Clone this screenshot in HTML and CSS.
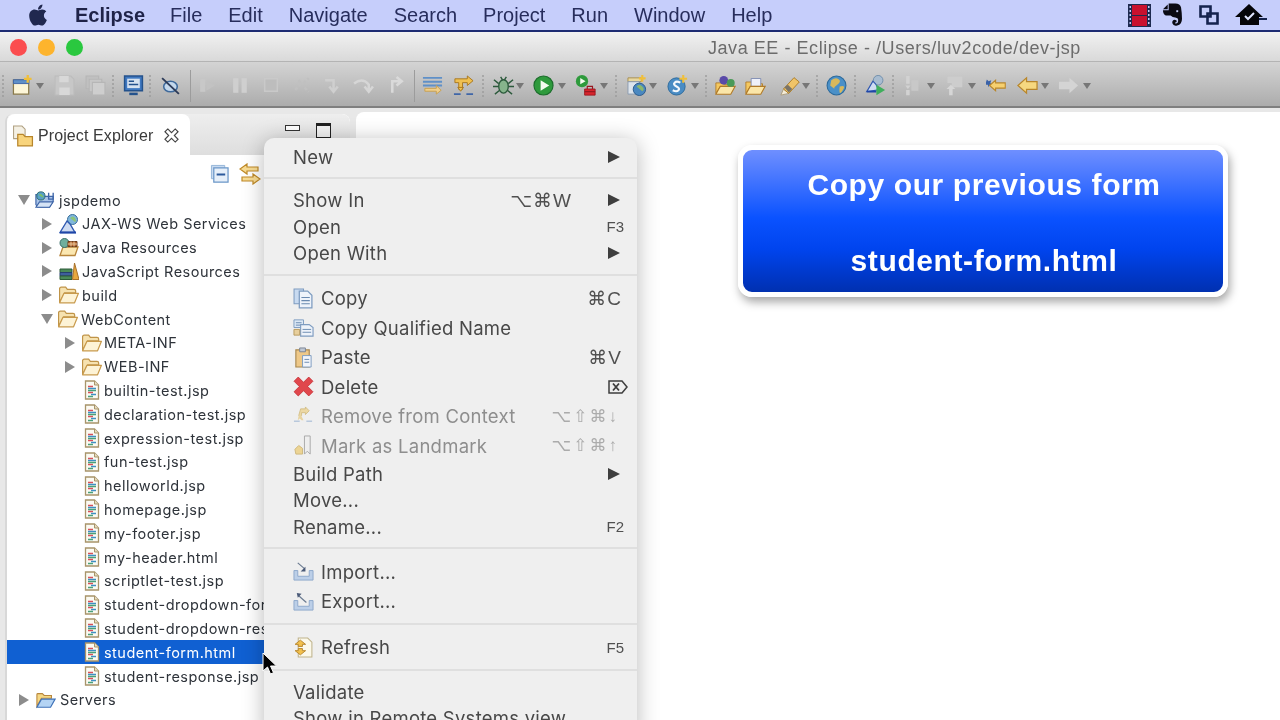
FILE: index.html
```html
<!DOCTYPE html>
<html lang="en">
<head>
    <meta charset="UTF-8">
    <title>Java EE - Eclipse</title>
    <link rel="stylesheet" href="styles.css">
</head>
<body>
<svg class="defs" width="0" height="0">
    <symbol id="i-folder" viewBox="1 2.500 18 16"><path d="M1.500 17V5q0-1.500 1.500-1.500h4l1.500 2h6q1.500 0 1.500 1.500v1.500H6L1.500 17z" fill="#f6e2b0" stroke="#c09448" stroke-width="1.100"/><path d="M1.500 17.500 5.500 9h13l-3.500 8.500z" fill="#fdf3d6" stroke="#c89a4c" stroke-width="1.100" stroke-linejoin="round"/></symbol>
    <symbol id="i-file" viewBox="0 0 20 20"><path d="M3.500 1h9l4 4v14h-13z" fill="#fbfaf2" stroke="#a8946a" stroke-width="1.300"/><path d="M12.500 1v4h4" fill="#e6dcc0" stroke="#a8946a"/><path d="M6 6.500h5M6 12.500h5" stroke="#d8505a" stroke-width="1.300"/><path d="M6 8.500h8M9 14.500h5" stroke="#3f8fc4" stroke-width="1.300"/><path d="M6 10.500h8M6 16.500h5" stroke="#4aa07a" stroke-width="1.300"/></symbol>
    <symbol id="i-project" viewBox="0 0 22 20"><path d="M1 15V4h7l2 2h10v5l-4 7H3z" fill="#a9c3e8" stroke="#3f66a8" stroke-width="1.300"/><path d="M1 18l4-6h15l-4 6z" fill="#d5e3f5" stroke="#3f66a8" stroke-width="1.300"/><circle cx="6.500" cy="5.500" r="4.500" fill="#58a0c8" stroke="#2c6a6a"/><path d="M4 4.500q2-2 4 0t1 3" fill="#7cc068"/><path d="M15 2v7h5V2" fill="none" stroke="#3f66a8" stroke-width="1.500"/></symbol>
    <symbol id="i-ws" viewBox="0 0 20 20"><circle cx="13.500" cy="5.500" r="5" fill="#7fb6dc" stroke="#3a6f9a"/><path d="M11 4q3-3 5 0t0 4" fill="#8cc47a"/><path d="M1 18.500 8 7l3 3 5 8.500z" fill="#cfdcf2" stroke="#2f58b0" stroke-width="1.400"/><path d="M1 18.500h16" stroke="#1f46a8" stroke-width="2"/></symbol>
    <symbol id="i-javares" viewBox="0 0 20 20"><path d="M1 17.500 4 9h15l-3 8.500z" fill="#fbe7b0" stroke="#b8863c" stroke-width="1.300"/><circle cx="5.500" cy="5" r="4.500" fill="#6fae9c" stroke="#39706a"/><path d="M9 3.500h9v5H9z" fill="#b4652e" stroke="#6f3d1a"/><path d="M12 3.500v5M15 3.500v5M9 6h9" stroke="#e8c89c"/></symbol>
    <symbol id="i-jsres" viewBox="0 0 20 20"><path d="M1 8h12v3.500H1z" fill="#4a8a58" stroke="#2c5a38"/><path d="M1 11.500h12V15H1z" fill="#3e5f9c" stroke="#26406e"/><path d="M1 15h12v3.500H1z" fill="#4a8a58" stroke="#2c5a38"/><path d="M13.500 18.500 15.500 2 20 18.500z" fill="#e8a840" stroke="#a8702a"/></symbol>
    <symbol id="i-servers" viewBox="0 0 22 20"><path d="M1 17V4q0-1 1-1h5l2 2h8v3H6L1 17z" fill="#f6d884" stroke="#b8863c" stroke-width="1.200"/><path d="M1 18l5-9h15l-5 9z" fill="#b4d4f4" stroke="#3f72b8" stroke-width="1.300"/></symbol>
    <symbol id="i-collapse" viewBox="0 0 20 20"><path d="M1.500 1.500h14v14h-14z" fill="#c8daf0" stroke="#94b4d8"/><path d="M4 4h15v15H4z" fill="#e6eff9" stroke="#6a96c8" stroke-width="1.300"/><path d="M7 11h9" stroke="#2c5a9c" stroke-width="2"/></symbol>
    <symbol id="i-link" viewBox="0 0 22 22"><path d="M8 1 1 6l7 5V8h11V4H8z" fill="#f8dc94" stroke="#c08a28" stroke-width="1.200"/><path d="M14 11l7 5-7 5v-3H3v-4h11z" fill="#f8dc94" stroke="#c08a28" stroke-width="1.200"/></symbol>
    <symbol id="i-new" viewBox="0 0 22 22"><path d="M1.500 5h16v15h-16z" fill="#fdf6d8" stroke="#8a7a4a" stroke-width="1.300"/><path d="M1.500 5h16v4h-16z" fill="#5f90c8" stroke="#3f66a8"/><path d="M16.500 0v8M12.500 4h8" stroke="#f0bf3a" stroke-width="2.400"/></symbol>
    <symbol id="i-save" viewBox="0 0 20 20"><path d="M1 1h15l3 3v15H1z" fill="#c7c7c7" stroke="#bcbcbc"/><path d="M5 1h9v6H5zM5 12h10v7H5z" fill="#d8d8d8"/></symbol>
    <symbol id="i-saveall" viewBox="0 0 20 20"><path d="M1 1h12v12H1z" fill="#c0c0c0" stroke="#b6b6b6"/><path d="M4 4h12v12H4z" fill="#c7c7c7" stroke="#b6b6b6"/><path d="M7 7h12v12H7z" fill="#cecece" stroke="#b6b6b6"/></symbol>
    <symbol id="i-monitor" viewBox="0 0 20 20"><path d="M1.500 1h17v14h-17z" fill="#3f78c0" stroke="#24528c" stroke-width="1.400"/><path d="M4 3.500h12v9H4z" fill="#d6e2f0"/><path d="M5.500 6h5M5.500 9h9" stroke="#24528c" stroke-width="1.300"/><path d="M6 18h8" stroke="#24528c" stroke-width="2.400"/></symbol>
    <symbol id="i-eyeoff" viewBox="0 0 20 20"><ellipse cx="10" cy="11" rx="6.500" ry="5" fill="#c4d8ec" stroke="#3f6a9c" stroke-width="1.500"/><path d="M2 3l16 15" stroke="#2c3a58" stroke-width="1.800"/></symbol>
    <symbol id="i-dis-step" viewBox="0 0 20 20"><path d="M2 4h5v12H2z" fill="#c8c8c8"/><path d="M8 5l8 5-8 5z" fill="#c2c2c2"/></symbol>
    <symbol id="i-dis-pause" viewBox="0 0 20 20"><path d="M3 3h5v14H3zM11 3h5v14h-5z" fill="#cfcfcf"/></symbol>
    <symbol id="i-dis-stop" viewBox="0 0 20 20"><path d="M3.500 3.500h12v12h-12z" fill="#bdbdbd" stroke="#c9c9c9" stroke-width="1.400"/></symbol>
    <symbol id="i-dis-net" viewBox="0 0 20 20"><path d="M3 14l5-5M11 8l5-5M6 5l3 3M12 12l4 4" stroke="#c0c0c0" stroke-width="2.500" stroke-dasharray="3 2"/></symbol>
    <symbol id="i-dis-into" viewBox="0 0 20 20"><path d="M3 5h8v9M7 11l4 5 4-5" fill="none" stroke="#cfcfcf" stroke-width="2.400"/></symbol>
    <symbol id="i-dis-over" viewBox="0 0 20 20"><path d="M1 8q8-6 14 1v6M11 11l4 5 4-5" fill="none" stroke="#d6d6d6" stroke-width="2.400"/></symbol>
    <symbol id="i-dis-ret" viewBox="0 0 20 20"><path d="M6 17V6h8M10 2l5 4-5 4" fill="none" stroke="#dadada" stroke-width="2.400"/></symbol>
    <symbol id="i-lines" viewBox="0 0 22 22"><path d="M1 3h20M1 7h20M1 11h20" stroke="#5f90c8" stroke-width="2"/><path d="M5 15h12v-3l5 5-5 4v-3H5z" fill="#f0cf8c" stroke="#c8a050" transform="translate(-2 -1)"/></symbol>
    <symbol id="i-stepdrop" viewBox="0 0 22 22"><path d="M2 4h13V1l6 5-6 5V8h-5v7H6V8H2z" fill="#f0c050" stroke="#a87820"/><path d="M1 20h7M14 20h7" stroke="#3f66a8" stroke-width="2"/><path d="M5 13l3 4 3-4z" fill="#f0c050" stroke="#a87820"/></symbol>
    <symbol id="i-bug" viewBox="0 0 22 22"><ellipse cx="11" cy="12" rx="5" ry="7" fill="#86b48c" stroke="#2c5a3c" stroke-width="1.400"/><path d="M1 5l5 4M21 5l-5 4M0 12h6M22 12h-6M2 20l5-4M20 20l-5-4M8 2l2 3M14 2l-2 3" stroke="#2c5a3c" stroke-width="1.500"/></symbol>
    <symbol id="i-run" viewBox="0 0 22 22"><circle cx="11" cy="11" r="10" fill="#2e9a3c" stroke="#1c6e2c" stroke-width="1.200"/><path d="M8 5.500l9 5.500-9 5.500z" fill="#f4fbef"/></symbol>
    <symbol id="i-runext" viewBox="0 0 24 24"><circle cx="8" cy="7" r="7" fill="#2e9a3c"/><path d="M6 3.500l6 3.500-6 3.500z" fill="#f4fbef"/><path d="M11 16h12v7H11z" fill="#d8242c" stroke="#981820"/><path d="M14 16v-3h6v3M11 19h12" fill="none" stroke="#981820" stroke-width="1.300"/></symbol>
    <symbol id="i-newserver" viewBox="0 0 22 22"><path d="M1 3h14v4H1z" fill="#e8d8a0" stroke="#a89050"/><path d="M1 7h12v13H1z" fill="#dde4ec" stroke="#8a9ab0"/><circle cx="13" cy="15" r="6.500" fill="#4a88c0" stroke="#2c5a8c"/><path d="M10 12q3-3 6 0t0 5" fill="#8cb86c"/><path d="M16 0v7M12.500 3.500h7" stroke="#f0bf3a" stroke-width="2.200"/></symbol>
    <symbol id="i-s" viewBox="0 0 22 22"><circle cx="10" cy="12" r="9" fill="#4a8cc4" stroke="#2c6a9c"/><path d="M14 8q-4-2-6 0t2 4 2 4-6 0" fill="none" stroke="#f4f8fc" stroke-width="2.200"/><path d="M17 0v8M13 4h8" stroke="#f0bf3a" stroke-width="2.200"/></symbol>
    <symbol id="i-openproj" viewBox="0 0 24 24"><path d="M1 21V9h8l2 2h9v2H6L1 21z" fill="#f4c860" stroke="#b07a28"/><path d="M1 22l5-9h17l-5 9z" fill="#fbe6a8" stroke="#b07a28" stroke-width="1.200"/><circle cx="10" cy="6" r="5" fill="#5a4aa8"/><circle cx="18" cy="9" r="4.500" fill="#4a9a58"/></symbol>
    <symbol id="i-opentype" viewBox="0 0 24 24"><path d="M1 21V8h7l2 2h10v3H6L1 21z" fill="#f4c860" stroke="#b07a28"/><path d="M7 4h11v9H7z" fill="#eef0f8" stroke="#7a88b0"/><path d="M1 22l5-9h17l-5 9z" fill="#fbe6a8" stroke="#b07a28" stroke-width="1.200"/></symbol>
    <symbol id="i-pencil" viewBox="0 0 24 24"><path d="M1 23l3-7 6 5z" fill="#f4ecd8" stroke="#a89878"/><path d="M4 16 16 3l6 5-12 13z" fill="#f0c468" stroke="#a87820"/><path d="M5 14l5 6 4-4-5-5z" fill="#7a7468"/></symbol>
    <symbol id="i-globe" viewBox="0 0 20 20"><circle cx="10" cy="10" r="9" fill="#4a90c8" stroke="#2c6a9c"/><path d="M5 5q4-3 7-1t-1 5-3 4-4-3zM13 11q3-1 4 0t-2 5-2-5z" fill="#d8b85c"/></symbol>
    <symbol id="i-wsrun" viewBox="0 0 22 24"><circle cx="14" cy="6" r="5.500" fill="#a8bcd0" stroke="#6a8aa8"/><path d="M1 19 8 7l3 3 4 7z" fill="#cfdcf2" stroke="#2f58b0" stroke-width="1.300"/><path d="M1 19h11" stroke="#1f46a8" stroke-width="2"/><path d="M12 11l10 6-10 6z" fill="#3fae5c"/></symbol>
    <symbol id="i-dis-a" viewBox="0 0 20 24"><path d="M5 1h4v9H5zM4 12l3 4 3-4zM5 17h4v6H5z" fill="#d2d2d2"/><path d="M11 6h8v12h-8z" fill="#c8c8c8"/></symbol>
    <symbol id="i-dis-b" viewBox="0 0 20 24"><path d="M3 2h17v12H8v-5H3z" fill="#cdcdcd"/><path d="M7 11l5 5H9v7H5v-7H2z" fill="#d6d6d6"/></symbol>
    <symbol id="i-lastedit" viewBox="0 0 24 20"><path d="M1 3l2 2 3-1-1 3 2 2-3 0-1 3-1-3-3 0z" fill="#3a62a8"/><path d="M4 10l7-6v3h11v6H11v3z" fill="#f6d070" stroke="#b8862c" stroke-width="1.200"/></symbol>
    <symbol id="i-back" viewBox="0 0 22 18"><path d="M1 9l9-8v4h11v8H10v4z" fill="#f6d880" stroke="#b8862c" stroke-width="1.300"/></symbol>
    <symbol id="i-fwd" viewBox="0 0 22 18"><path d="M21 9l-9-8v4H1v8h11v4z" fill="#d4d4d4"/></symbol>
    <symbol id="m-copy" viewBox="0 0 20 20"><path d="M1 1h9v14H1z" fill="#c8daf0" stroke="#7e9cc0"/><path d="M6 3h8l4 4v12H6z" fill="#eef3fa" stroke="#7e9cc0" stroke-width="1.200"/><path d="M8 9h8M8 12h8M8 15h8" stroke="#6a8ab0"/></symbol>
    <symbol id="m-cqn" viewBox="0 0 22 20"><path d="M1 2h10v8H1z" fill="#dce8f5" stroke="#7e9cc0"/><path d="M3 5h6M3 7.500h6" stroke="#6a8ab0"/><path d="M8 7h9l4 3v9H8z" fill="#eef3fa" stroke="#7e9cc0" stroke-width="1.200"/><path d="M10 12h9M10 15h9" stroke="#6a8ab0"/><path d="M1 12h6v6H1z" fill="#e8cf9c" stroke="#b89a60"/></symbol>
    <symbol id="m-paste" viewBox="0 0 20 22"><path d="M2 3h14v18H2z" fill="#eec888" stroke="#a88850" stroke-width="1.200"/><path d="M6 1h6v4H6z" fill="#c0c8d4" stroke="#7a8494"/><path d="M9 9h9v12H9z" fill="#f2f5fa" stroke="#7e9cc0"/><path d="M11 13h5M11 16h5" stroke="#6a8ab0"/></symbol>
    <symbol id="m-delete" viewBox="0 0 20 20"><path d="M5 1l5 5 5-5 4 4-5 5 5 5-4 4-5-5-5 5-4-4 5-5-5-5z" fill="#e0474c" stroke="#c83238" stroke-width=".8"/></symbol>
    <symbol id="m-remove" viewBox="0 0 22 20"><path d="M8 2l5 0 0-2 4 4-4 4v-2H9v3H6z" fill="#ecd8a4" stroke="#cfb87c" stroke-width=".8"/><path d="M8 8l3 6h-2l-2-2-2 2 1-5z" fill="#e8d4a0"/><path d="M1 15h6M14 15h6" stroke="#b8c8dc" stroke-width="1.500"/></symbol>
    <symbol id="m-mark" viewBox="0 0 20 22"><path d="M11 1h6v19l-3-3-3 3z" fill="#eeeeee" stroke="#a8a8a8"/><path d="M1 15l4-4 4 3v6H2z" fill="#ecd494" stroke="#cfb87c"/></symbol>
    <symbol id="m-import" viewBox="0 0 22 20"><path d="M1 9v10h20V9h-4v6H5V9z" fill="#bccfe8" stroke="#8ea8cc"/><path d="M5 1l7 6" stroke="#6a7a90" stroke-width="1.200"/><path d="M13 5l0 5-5 0z" fill="#4a5a78"/></symbol>
    <symbol id="m-export" viewBox="0 0 22 20"><path d="M1 9v10h20V9h-4v6H5V9z" fill="#bccfe8" stroke="#8ea8cc"/><path d="M6 4l8 7" stroke="#6a7a90" stroke-width="1.200"/><path d="M4 1l5 1-4 4z" fill="#4a5a78"/></symbol>
    <symbol id="m-refresh" viewBox="0 0 20 20"><path d="M5 1h9l4 4v14H5z" fill="#fbf8ea" stroke="#c0b48c"/><path d="M2 7l5-4 5 4H9v2H5V7zM12 13l-5 4-5-4h3v-2h4v2z" fill="#f2c04c" stroke="#b8862c" stroke-width=".9"/></symbol>
</svg>

<div class="menubar">
    <svg class="apple" viewBox="0 0 384 512"><path d="M318.700 268.700c-.2-36.700 16.400-64.400 50-84.800-18.800-26.900-47.200-41.700-84.700-44.600-35.500-2.800-74.300 20.700-88.500 20.700-15 0-49.400-19.700-76.400-19.700C63.300 141.200 4 184.800 4 273.500q0 39.300 14.400 81.200c12.800 36.700 59 126.700 107.200 125.200 25.200-.6 43-17.900 75.800-17.900 31.800 0 48.300 17.900 76.400 17.900 48.600-.7 90.400-82.500 102.600-119.300-65.200-30.700-61.700-90-61.700-91.900zm-56.600-164.200c27.300-32.400 24.800-61.900 24-72.500-24.100 1.400-52 16.400-67.900 34.900-17.500 19.800-27.800 44.300-25.600 71.900 26.100 2 49.900-11.400 69.500-34.300z"/></svg>
    <b>Eclipse</b>
    <span>File</span>
    <span>Edit</span>
    <span>Navigate</span>
    <span>Search</span>
    <span>Project</span>
    <span>Run</span>
    <span>Window</span>
    <span>Help</span>
    <div class="status-icons">
        <svg class="st-film" viewBox="0 0 23 23"><path d="M0 0h23v23H0z" fill="#1e2a50"/><path d="M4 1h15v10H4zM4 12h15v10H4z" fill="#c8102e"/><path d="M1.500 2h1.500v2H1.500zM1.500 6h1.500v2H1.500zM1.500 10h1.500v2H1.500zM1.500 14h1.500v2H1.500zM1.500 18h1.500v2H1.500zM20 2h1.500v2H20zM20 6h1.500v2H20zM20 10h1.500v2H20zM20 14h1.500v2H20zM20 18h1.500v2H20z" fill="#c5cdf8"/></svg>
        <svg class="st-note" viewBox="0 0 21 24"><path d="M1 6 6 1v5zM7 0h7q5 0 6 4 1 6 1 12t-5 7q-4 1-5-2t2-4l2 .5q1 1 0 2-2 0-1 1.500 3 .5 3-4 0-2-3-2.500-3 0-5-2H4Q1 11 1 7h6z" fill="#0b0b14"/><path d="M15 7h2v2h-2z" fill="#c5cdf8"/></svg>
        <svg class="st-dup" viewBox="0 0 20 20"><path d="M1.500 1.500h10v10h-10zM8.500 8.500h10v10h-10z" fill="none" stroke="#15234e" stroke-width="2.600"/></svg>
        <svg class="st-home" viewBox="0 0 32 22"><path d="M14 0 0 13h5v8h19v-8h4z" fill="#050508"/><path d="M10 12l3 3 6-6" fill="none" stroke="#dfe4fc" stroke-width="2"/><path d="M24 15h8" stroke="#15234e" stroke-width="2"/></svg>
    </div>
</div>

<div class="titlebar">
    <i class="light red"></i><i class="light amber"></i><i class="light green"></i>
    <span class="title">Java EE - Eclipse - /Users/luv2code/dev-jsp</span>
</div>

<div class="toolbar">
    <i class="grip"></i>
    <svg class="tool"><use href="#i-new"/></svg><i class="drop"></i>
    <svg class="tool"><use href="#i-save"/></svg>
    <svg class="tool"><use href="#i-saveall"/></svg>
    <i class="grip"></i>
    <svg class="tool"><use href="#i-monitor"/></svg>
    <i class="grip"></i>
    <svg class="tool"><use href="#i-eyeoff"/></svg>
    <i class="vsep"></i>
    <svg class="tool"><use href="#i-dis-step"/></svg>
    <svg class="tool"><use href="#i-dis-pause"/></svg>
    <svg class="tool"><use href="#i-dis-stop"/></svg>
    <svg class="tool"><use href="#i-dis-net"/></svg>
    <svg class="tool"><use href="#i-dis-into"/></svg>
    <svg class="tool"><use href="#i-dis-over"/></svg>
    <svg class="tool"><use href="#i-dis-ret"/></svg>
    <i class="vsep"></i>
    <svg class="tool"><use href="#i-lines"/></svg>
    <svg class="tool"><use href="#i-stepdrop"/></svg>
    <i class="grip"></i>
    <svg class="tool"><use href="#i-bug"/></svg><i class="drop"></i>
    <svg class="tool"><use href="#i-run"/></svg><i class="drop"></i>
    <svg class="tool"><use href="#i-runext"/></svg><i class="drop"></i>
    <i class="grip"></i>
    <svg class="tool"><use href="#i-newserver"/></svg><i class="drop"></i>
    <svg class="tool"><use href="#i-s"/></svg><i class="drop"></i>
    <i class="grip"></i>
    <svg class="tool"><use href="#i-openproj"/></svg>
    <svg class="tool"><use href="#i-opentype"/></svg>
    <svg class="tool"><use href="#i-pencil"/></svg><i class="drop"></i>
    <i class="grip"></i>
    <svg class="tool"><use href="#i-globe"/></svg>
    <i class="grip"></i>
    <svg class="tool"><use href="#i-wsrun"/></svg>
    <i class="grip"></i>
    <svg class="tool"><use href="#i-dis-a"/></svg><i class="drop"></i>
    <svg class="tool"><use href="#i-dis-b"/></svg><i class="drop"></i>
    <svg class="tool"><use href="#i-lastedit"/></svg>
    <svg class="tool"><use href="#i-back"/></svg><i class="drop"></i>
    <svg class="tool"><use href="#i-fwd"/></svg><i class="drop"></i>
</div>

<div class="workbench">
    <div class="view">
        <div class="view-tabs">
            <div class="tab">
                <svg class="tab-icon" viewBox="1 0 20 21"><path d="M2 1h8l3 3v9H2z" fill="#f4f0e4" stroke="#b0a080"/><path d="M6 12V9h5l2 2h7v9H6z" fill="#f8d47c" stroke="#b8862c" stroke-width="1.200"/></svg>
                <span>Project Explorer</span>
                <svg class="tab-close" viewBox="0 0 16 16"><path d="M4 1l4 4 4-4 3 3-4 4 4 4-3 3-4-4-4 4-3-3 4-4-4-4z" fill="#fff" stroke="#444" stroke-width="1.200"/></svg>
            </div>
            <div class="view-btns">
                <i class="btn-min"></i>
                <i class="btn-max"></i>
            </div>
        </div>
        <div class="view-bar">
            <svg class="bar-icon collapse"><use href="#i-collapse"/></svg>
            <svg class="bar-icon"><use href="#i-link"/></svg>
        </div>
        <div class="tree">
            <div class="row l0"><i class="tw down"></i><svg class="ic"><use href="#i-project"/></svg><span>jspdemo</span></div>
            <div class="row l1"><i class="tw"></i><svg class="ic"><use href="#i-ws"/></svg><span>JAX-WS Web Services</span></div>
            <div class="row l1"><i class="tw"></i><svg class="ic"><use href="#i-javares"/></svg><span>Java Resources</span></div>
            <div class="row l1"><i class="tw"></i><svg class="ic"><use href="#i-jsres"/></svg><span>JavaScript Resources</span></div>
            <div class="row l1"><i class="tw"></i><svg class="ic"><use href="#i-folder"/></svg><span>build</span></div>
            <div class="row l1"><i class="tw down"></i><svg class="ic"><use href="#i-folder"/></svg><span>WebContent</span></div>
            <div class="row l2"><i class="tw"></i><svg class="ic"><use href="#i-folder"/></svg><span>META-INF</span></div>
            <div class="row l2"><i class="tw"></i><svg class="ic"><use href="#i-folder"/></svg><span>WEB-INF</span></div>
            <div class="row l2"><i class="tw none"></i><svg class="ic"><use href="#i-file"/></svg><span>builtin-test.jsp</span></div>
            <div class="row l2"><i class="tw none"></i><svg class="ic"><use href="#i-file"/></svg><span>declaration-test.jsp</span></div>
            <div class="row l2"><i class="tw none"></i><svg class="ic"><use href="#i-file"/></svg><span>expression-test.jsp</span></div>
            <div class="row l2"><i class="tw none"></i><svg class="ic"><use href="#i-file"/></svg><span>fun-test.jsp</span></div>
            <div class="row l2"><i class="tw none"></i><svg class="ic"><use href="#i-file"/></svg><span>helloworld.jsp</span></div>
            <div class="row l2"><i class="tw none"></i><svg class="ic"><use href="#i-file"/></svg><span>homepage.jsp</span></div>
            <div class="row l2"><i class="tw none"></i><svg class="ic"><use href="#i-file"/></svg><span>my-footer.jsp</span></div>
            <div class="row l2"><i class="tw none"></i><svg class="ic"><use href="#i-file"/></svg><span>my-header.html</span></div>
            <div class="row l2"><i class="tw none"></i><svg class="ic"><use href="#i-file"/></svg><span>scriptlet-test.jsp</span></div>
            <div class="row l2"><i class="tw none"></i><svg class="ic"><use href="#i-file"/></svg><span>student-dropdown-form.html</span></div>
            <div class="row l2"><i class="tw none"></i><svg class="ic"><use href="#i-file"/></svg><span>student-dropdown-response.jsp</span></div>
            <div class="row l2 selected"><i class="tw none"></i><svg class="ic"><use href="#i-file"/></svg><span>student-form.html</span></div>
            <div class="row l2"><i class="tw none"></i><svg class="ic"><use href="#i-file"/></svg><span>student-response.jsp</span></div>
            <div class="row l0"><i class="tw"></i><svg class="ic"><use href="#i-servers"/></svg><span>Servers</span></div>
        </div>
    </div>
    <div class="editor"></div>
</div>

<div class="menu">
    <div class="mi"><span class="label">New</span><i class="sub"></i></div>
    <div class="sep"></div>
    <div class="mi"><span class="label">Show In</span><span class="key combo">⌥⌘W</span><i class="sub"></i></div>
    <div class="mi"><span class="label">Open</span><span class="key fn">F3</span></div>
    <div class="mi"><span class="label">Open With</span><i class="sub"></i></div>
    <div class="sep"></div>
    <div class="mi has-icon"><svg class="mic"><use href="#m-copy"/></svg><span class="label">Copy</span><span class="key cmd">⌘C</span></div>
    <div class="mi has-icon"><svg class="mic"><use href="#m-cqn"/></svg><span class="label">Copy Qualified Name</span></div>
    <div class="mi has-icon"><svg class="mic"><use href="#m-paste"/></svg><span class="label">Paste</span><span class="key cmd">⌘V</span></div>
    <div class="mi has-icon"><svg class="mic"><use href="#m-delete"/></svg><span class="label">Delete</span><svg class="del" viewBox="0 0 20 14"><path d="M1 1h13l5 6-5 6H1z" fill="none" stroke="#3e3e3e" stroke-width="1.500"/><path d="M5 3.500l6 7M11 3.500l-6 7" stroke="#3e3e3e" stroke-width="1.800"/></svg></div>
    <div class="mi has-icon off"><svg class="mic"><use href="#m-remove"/></svg><span class="label">Remove from Context</span><span class="key cmd">⌥⇧⌘↓</span></div>
    <div class="mi has-icon off"><svg class="mic"><use href="#m-mark"/></svg><span class="label">Mark as Landmark</span><span class="key cmd">⌥⇧⌘↑</span></div>
    <div class="mi"><span class="label">Build Path</span><i class="sub"></i></div>
    <div class="mi"><span class="label">Move...</span></div>
    <div class="mi"><span class="label">Rename...</span><span class="key fn">F2</span></div>
    <div class="sep"></div>
    <div class="mi has-icon"><svg class="mic"><use href="#m-import"/></svg><span class="label">Import...</span></div>
    <div class="mi has-icon"><svg class="mic"><use href="#m-export"/></svg><span class="label">Export...</span></div>
    <div class="sep"></div>
    <div class="mi has-icon"><svg class="mic"><use href="#m-refresh"/></svg><span class="label">Refresh</span><span class="key fn">F5</span></div>
    <div class="sep"></div>
    <div class="mi"><span class="label">Validate</span></div>
    <div class="mi"><span class="label">Show in Remote Systems view</span></div>
</div>

<div class="callout">
    <p>Copy our previous form</p>
    <p>student-form.html</p>
</div>

<svg class="cursor" viewBox="0 0 16 24"><path d="M1 1v18l4.500-4 3 7 3-1.300-3-6.700h6z" fill="#000" stroke="#fff" stroke-width="1"/></svg>
</body>
</html>
```

FILE: styles.css
```css
* {
    box-sizing: border-box;
}
html, body {
    margin: 0;
    padding: 0;
    height: 100%;
    overflow: hidden;
    background-color: #e8e8e8;
    font-family: "Liberation Sans", Arial, sans-serif;
    color: #333;
}
body {
    display: flex;
    flex-direction: column;
    filter: blur(0.45px);
}
.defs {
    position: absolute;
}

/* mac menu bar */
.menubar {
    display: flex;
    align-items: center;
    gap: 26px;
    height: 32px;
    padding-left: 28px;
    background-color: #c6cefb;
    border-bottom: 2px solid #1d2b72;
    font-size: 20px;
    color: #272d5c;
}
.menubar b {
    color: #1f2348;
    margin-left: 1px;
    margin-right: -1px;
}
.apple {
    width: 20px;
    height: 24px;
    fill: #20284f;
}
.status-icons {
    display: flex;
    align-items: center;
    margin-left: auto;
    width: 152px;
}
.st-film { width: 23px; height: 23px; margin-right: 11px; }
.st-note { width: 20px; height: 24px; margin-right: 17px; }
.st-dup { width: 20px; height: 20px; margin-right: 16px; }
.st-home { width: 32px; height: 22px; }

/* window title */
.titlebar {
    display: flex;
    align-items: center;
    height: 30px;
    padding: 2px 0 0 10px;
    background: linear-gradient(#f1f1f1, #d9d9d9);
    border-bottom: 1px solid #b4b4b4;
}
.light {
    width: 17px;
    height: 17px;
    border-radius: 50%;
    margin-right: 11px;
}
.red { background-color: #fb4d4f; }
.amber { background-color: #fdb42d; }
.green { background-color: #2ac83f; }
.title {
    margin: 1px 0 0 614px;
    font-size: 18px;
    letter-spacing: 0.55px;
    color: #6c6c6c;
    white-space: nowrap;
}

/* toolbar, tracks follow the left edge of each tool */
.toolbar {
    display: grid;
    grid-template-columns: 9.5px 24.5px 17.5px 31px 27.5px 10.5px 26.5px 10.5px 30px 8px 32px 31px 31px 30px 31px 33px 28px 8px 31px 29.5px 10.5px 23.5px 16.5px 25.5px 16.5px 25.5px 15px 11.5px 22.5px 17.5px 24.5px 14px 9.5px 30px 35px 22.5px 14px 9.5px 28.5px 10.5px 27.5px 7.5px 27.5px 15.5px 25.5px 17.5px 31px 24.5px 16.5px 25.5px 8px;
    align-items: center;
    justify-items: start;
    height: 46px;
    padding: 3px 0 0 2px;
    background: linear-gradient(#d4d4d4, #acacac);
    border-bottom: 2px solid #7f7f7f;
}
.tool {
    width: 21px;
    height: 21px;
    overflow: visible;
}
.drop {
    width: 0;
    height: 0;
    border-left: 4px solid transparent;
    border-right: 4px solid transparent;
    border-top: 6px solid #777;
}
.grip {
    width: 2px;
    height: 22px;
    background-image: linear-gradient(#9a9a9a 50%, transparent 50%);
    background-size: 2px 4px;
    opacity: 0.7;
}
.vsep {
    width: 1px;
    height: 32px;
    background-color: #9c9c9c;
}

/* panes */
.workbench {
    flex-grow: 1;
    display: flex;
    gap: 6px;
    padding: 4px 0 0 5px;
    min-height: 0;
}
.view {
    width: 345px;
    margin-top: 2px;
    background-color: #fff;
    border-left: 2px solid #d8d8d8;
    border-radius: 8px 8px 0 0;
    overflow: hidden;
}
.editor {
    flex-grow: 1;
    background-color: #fff;
    border-radius: 8px 0 0 0;
}
.view-tabs {
    display: flex;
    height: 41px;
    background: linear-gradient(#eeeeee, #dedede);
    border-radius: 0 8px 0 0;
}
.tab {
    display: flex;
    align-items: center;
    width: 183px;
    padding: 2px 0 0 5px;
    background-color: #fff;
    border-radius: 8px 8px 0 0;
    font-size: 16px;
    letter-spacing: 0.1px;
    color: #3a3a3a;
}
.tab-icon {
    width: 22px;
    height: 22px;
    margin-right: 4px;
}
.tab-close {
    width: 15px;
    height: 15px;
    margin-left: 11px;
}
.view-btns {
    display: flex;
    align-items: center;
    gap: 16px;
    padding: 0 0 8px 95px;
}
.btn-min {
    width: 15px;
    height: 6px;
    margin-bottom: 6px;
    border: 1px solid #333;
    background-color: #fff;
}
.btn-max {
    width: 15px;
    height: 15px;
    border: 1px solid #222;
    border-top-width: 3px;
    background-color: #f4f4f4;
}
.view-bar {
    display: flex;
    justify-content: flex-end;
    align-items: center;
    gap: 10px;
    height: 33.2px;
    padding: 4px 89px 0 0;
}
.bar-icon {
    width: 22px;
    height: 22px;
}
.bar-icon.collapse {
    width: 19px;
    height: 19px;
}

/* tree */
.row {
    display: flex;
    align-items: center;
    height: 23.8px;
    font-family: Inter, "Liberation Sans", sans-serif;
    font-size: 14.5px;
    letter-spacing: 0.47px;
    color: #2e333a;
    white-space: nowrap;
}
.l0 { padding-left: 11px; }
.l1 { padding-left: 34px; }
.l2 { padding-left: 57px; }
.tw {
    width: 0;
    height: 0;
    margin: 0 7px 0 1px;
    border-top: 6px solid transparent;
    border-bottom: 6px solid transparent;
    border-left: 10px solid #8c8c8c;
}
.tw.down {
    margin: 0 5px 0 0;
    border-left: 6px solid transparent;
    border-right: 6px solid transparent;
    border-top: 10px solid #8c8c8c;
    border-bottom: 0;
}
.tw.none {
    border-left-color: transparent;
}
.ic {
    flex: none;
    width: 20px;
    height: 20px;
    margin-right: 3px;
    overflow: visible;
}
.l0 .ic {
    margin-right: 4px;
}
.l2 .ic {
    margin-right: 2px;
}
.selected {
    background-color: #1060d2;
    color: #fff;
}

/* context menu */
.menu {
    position: absolute;
    left: 264px;
    top: 138px;
    width: 373px;
    height: 600px;
    padding-top: 5.5px;
    background-color: #efefef;
    border-radius: 10px 10px 0 0;
    box-shadow: 0 3px 22px rgba(0, 0, 0, 0.28);
    font-family: Inter, "Liberation Sans", sans-serif;
    font-size: 18.5px;
    letter-spacing: 0.25px;
    color: #484848;
}
.mi {
    display: flex;
    align-items: center;
    height: 26.7px;
    padding: 0 13px 0 29px;
}
.mi.has-icon {
    height: 29.5px;
}
.mi.off {
    color: #8e8e8e;
}
.label {
    flex-grow: 1;
    white-space: nowrap;
}
.mic {
    width: 21px;
    height: 21px;
    margin-right: 7px;
    flex: none;
}
.sep {
    height: 16.5px;
    background: linear-gradient(#dfdfdf, #dfdfdf) 0 7px / 100% 2px no-repeat;
}
.sub {
    width: 0;
    height: 0;
    margin-right: 4px;
    border-top: 6px solid transparent;
    border-bottom: 6px solid transparent;
    border-left: 12px solid #3e3e3e;
}
.key {
    font-family: "Liberation Sans", "DejaVu Sans", sans-serif;
    color: #505050;
    white-space: nowrap;
    letter-spacing: 0;
}
.combo {
    margin-right: 36px;
    font-size: 19px;
    letter-spacing: 1px;
}
.cmd {
    margin-right: 2px;
    font-size: 19px;
    letter-spacing: 1px;
}
.off .key {
    margin-right: 5px;
    color: #ababab;
    font-size: 17px;
    letter-spacing: 2px;
}
.fn {
    font-size: 15px;
}
.del {
    flex: none;
    width: 20px;
    height: 14px;
    margin-right: -4px;
}

/* blue note over the editor */
.callout {
    position: absolute;
    left: 738px;
    top: 145px;
    width: 490px;
    height: 152px;
    padding: 17px 0 0 2px;
    border: 5px solid #fff;
    border-radius: 14px;
    background: linear-gradient(#6f8fff, #0a52ff 48%, #0044ee 70%, #0030b0);
    box-shadow: 2px 5px 10px rgba(0, 0, 0, 0.35);
    text-align: center;
    color: #fff;
    font-size: 30px;
    font-weight: bold;
    letter-spacing: 0.6px;
}
.callout p {
    margin: 0;
    height: 76px;
    line-height: 36px;
}
.cursor {
    position: absolute;
    left: 262px;
    top: 652px;
    width: 16px;
    height: 24px;
}
```
